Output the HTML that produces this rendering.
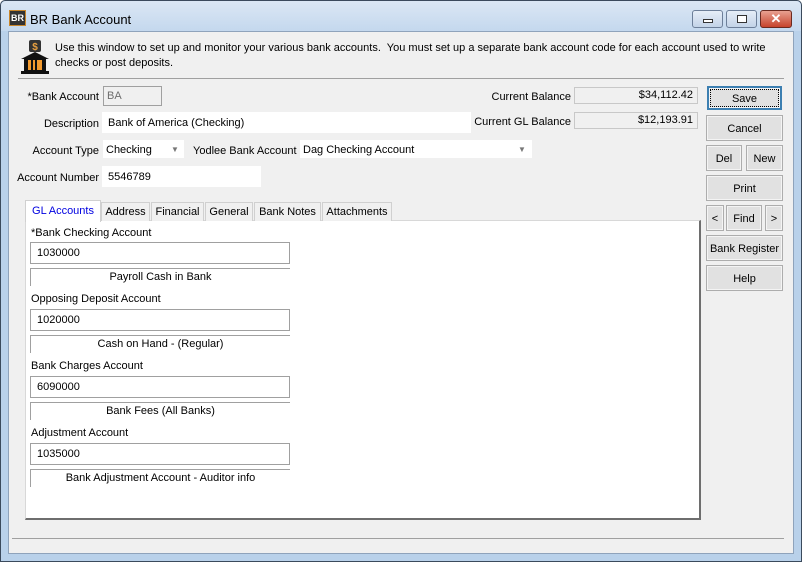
<!DOCTYPE html>
<html><head><style>
*{box-sizing:border-box;margin:0;padding:0}
body{width:802px;height:562px;position:relative;overflow:hidden;background:#fff;font-family:"Liberation Sans",sans-serif;font-size:11px;color:#000}
.a{position:absolute}
.lbl{position:absolute;white-space:nowrap;font-size:11px}
.r{text-align:right}
.inp{position:absolute;background:#fff;padding-left:4px;line-height:22px}
.btn{position:absolute;background:#e1e1e1;border:1px solid #adadad;box-shadow:inset 0 0 0 1px #f4f4f4;text-align:center;font-size:11px}
.tab{position:absolute;top:202px;height:19px;border:1px solid #d0d0d0;border-bottom:none;background:#f0f0f0;text-align:center;line-height:18px;font-size:11px}
.fld{position:absolute;left:30px;width:260px;height:22px;border:1px solid #a0a0a0;background:#fff;padding-left:6px;line-height:21px}
.dsc{position:absolute;left:30px;width:260px;height:18px;border-top:1px solid #a0a0a0;border-left:1px solid #a0a0a0;text-align:center;line-height:17px}
</style></head><body>
<div class="a" style="left:0;top:0;width:802px;height:562px;background:#b9d1ea;border:1px solid #3b4a5c;border-radius:5px 5px 0 0"></div>
<div class="a" style="left:1px;top:1px;width:800px;height:30px;background:linear-gradient(#dbe7f4,#c4d8ee);border-radius:5px 5px 0 0"></div>
<div class="a" style="left:9px;top:10px;width:17px;height:16px;background:#333;border:1px solid #c8852a;color:#fff;font-weight:bold;font-size:9px;line-height:14px;text-align:center">BR</div>
<div class="lbl" style="left:30px;top:12px;font-size:13px">BR Bank Account</div>
<div class="a" style="left:692px;top:10px;width:31px;height:18px;border:1px solid #6d7f99;border-radius:3px;background:linear-gradient(#e6eef8,#c3d3e8)"><div class="a" style="left:10px;top:8px;width:10px;height:4px;border:1px solid #333;background:#fff"></div></div>
<div class="a" style="left:726px;top:10px;width:31px;height:18px;border:1px solid #6d7f99;border-radius:3px;background:linear-gradient(#e6eef8,#c3d3e8)"><div class="a" style="left:10px;top:4px;width:10px;height:8px;border:1px solid #333;background:#fff"></div></div>
<div class="a" style="left:760px;top:10px;width:32px;height:18px;border:1px solid #6b2a20;border-radius:3px;background:linear-gradient(#e8a191,#c7432c);color:#fff;font-weight:bold;font-size:13px;line-height:15px;text-align:center">✕</div>
<div class="a" style="left:8px;top:31px;width:786px;height:523px;background:#f0f0f0;border:1px solid #8fa3bb"></div>
<svg class="a" style="left:20px;top:39px" width="32" height="36" viewBox="0 0 32 36"><rect x="9" y="1" width="12" height="12" rx="2" fill="#333"/><text x="15" y="11" font-size="10" fill="#e8a040" text-anchor="middle" font-family="Liberation Sans" font-weight="bold">$</text><path d="M1 20 L15 13 L29 20 Z" fill="#111"/><rect x="4" y="20" width="22" height="12" fill="#111"/><rect x="8" y="21" width="14" height="10" fill="#f29a2e"/><rect x="11" y="21" width="2" height="10" fill="#111"/><rect x="15" y="21" width="2" height="10" fill="#111"/><rect x="1" y="32" width="28" height="3" fill="#111"/></svg>
<div class="lbl" style="left:55px;top:42px">Use this window to set up and monitor your various bank accounts.&nbsp; You must set up a separate bank account code for each account used to write</div>
<div class="lbl" style="left:55px;top:57px">checks or post deposits.</div>
<div class="a" style="left:18px;top:78px;width:766px;height:1px;background:#a0a0a0"></div>
<div class="lbl r" style="left:0;width:99px;top:91px">*Bank Account</div>
<div class="inp" style="left:103px;top:86px;width:59px;height:20px;background:#f0f0f0;border:1px solid #a0a0a0;color:#6d6d6d;line-height:18px;padding-left:3px">BA</div>
<div class="lbl r" style="left:0;width:99px;top:118px">Description</div>
<div class="inp" style="left:102px;top:112px;width:369px;height:21px;padding-left:6px">Bank of America (Checking)</div>
<div class="lbl r" style="left:0;width:99px;top:145px">Account Type</div>
<div class="inp" style="left:103px;top:140px;width:81px;height:18px;line-height:20px;padding-left:3px">Checking<span class="a" style="left:68px;top:0;color:#777;font-size:8px">▼</span></div>
<div class="lbl" style="left:193px;top:145px">Yodlee Bank Account</div>
<div class="inp" style="left:300px;top:140px;width:232px;height:18px;line-height:20px;padding-left:3px">Dag Checking Account<span class="a" style="left:218px;top:0;color:#777;font-size:8px">▼</span></div>
<div class="lbl r" style="left:0;width:99px;top:172px">Account Number</div>
<div class="inp" style="left:102px;top:166px;width:159px;height:21px;padding-left:6px">5546789</div>
<div class="lbl r" style="left:400px;width:171px;top:91px">Current Balance</div>
<div class="inp r" style="left:574px;top:87px;width:124px;height:17px;background:#f0f0f0;border:1px solid #c8c8c8;line-height:15px;padding-right:4px">$34,112.42</div>
<div class="lbl r" style="left:400px;width:171px;top:116px">Current GL Balance</div>
<div class="inp r" style="left:574px;top:112px;width:124px;height:17px;background:#f0f0f0;border:1px solid #c8c8c8;line-height:15px;padding-right:4px">$12,193.91</div>
<div class="btn" style="left:707px;top:86px;width:75px;height:24px;border:2px solid #3c7fb1;line-height:22px;outline:1px dotted #000;outline-offset:-4px">Save</div>
<div class="btn" style="left:706px;top:115px;width:77px;height:26px;line-height:26px">Cancel</div>
<div class="btn" style="left:706px;top:145px;width:36px;height:26px;line-height:26px">Del</div>
<div class="btn" style="left:746px;top:145px;width:37px;height:26px;line-height:26px">New</div>
<div class="btn" style="left:706px;top:175px;width:77px;height:26px;line-height:26px">Print</div>
<div class="btn" style="left:706px;top:205px;width:18px;height:26px;line-height:26px">&lt;</div>
<div class="btn" style="left:726px;top:205px;width:36px;height:26px;line-height:26px">Find</div>
<div class="btn" style="left:765px;top:205px;width:18px;height:26px;line-height:26px">&gt;</div>
<div class="btn" style="left:706px;top:235px;width:77px;height:26px;line-height:26px">Bank Register</div>
<div class="btn" style="left:706px;top:265px;width:77px;height:26px;line-height:26px">Help</div>
<div class="a" style="left:25px;top:220px;width:676px;height:300px;background:#fff;border:1px solid #d8d8d8;border-right:2px solid #6e6e6e;border-bottom:2px solid #6e6e6e"></div>
<div class="tab" style="left:25px;top:200px;width:76px;height:22px;background:#fff;color:#0000e0;line-height:21px">GL Accounts</div>
<div class="tab" style="left:101px;width:49px">Address</div>
<div class="tab" style="left:151px;width:53px">Financial</div>
<div class="tab" style="left:205px;width:48px">General</div>
<div class="tab" style="left:254px;width:67px">Bank Notes</div>
<div class="tab" style="left:322px;width:70px">Attachments</div>
<div class="lbl" style="left:31px;top:227px">*Bank Checking Account</div>
<div class="fld" style="top:242px">1030000</div>
<div class="dsc" style="top:268px">Payroll Cash in Bank</div>
<div class="lbl" style="left:31px;top:293px">Opposing Deposit Account</div>
<div class="fld" style="top:309px">1020000</div>
<div class="dsc" style="top:335px">Cash on Hand - (Regular)</div>
<div class="lbl" style="left:31px;top:360px">Bank Charges Account</div>
<div class="fld" style="top:376px">6090000</div>
<div class="dsc" style="top:402px">Bank Fees (All Banks)</div>
<div class="lbl" style="left:31px;top:427px">Adjustment Account</div>
<div class="fld" style="top:443px">1035000</div>
<div class="dsc" style="top:469px">Bank Adjustment Account - Auditor info</div>
<div class="a" style="left:12px;top:538px;width:772px;height:1px;background:#a0a0a0"></div>
</body></html>
